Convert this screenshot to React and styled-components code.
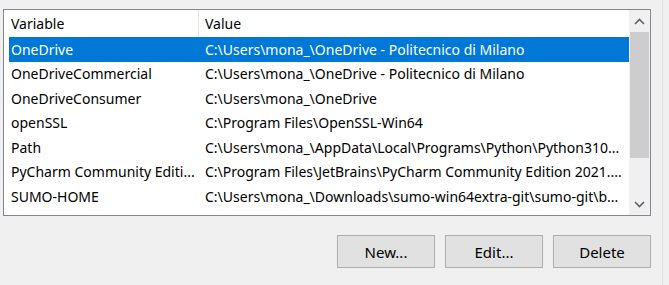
import styled, { createGlobalStyle } from 'styled-components';

const GlobalStyle = createGlobalStyle`
  html, body {
    margin: 0;
    padding: 0;
    background: #f0f0f0;
  }
  body {
    font-family: 'Noto Sans', 'Open Sans', sans-serif;
    font-size: 14px;
    color: #000;
  }
`;

const Window = styled.div`
  width: 663px;
  height: 285px;
  border-right: 1px solid #dfdfdf;
  box-sizing: border-box;
  padding: 9px 0 0 3px;
  display: flex;
  flex-direction: column;
`;

const ListBox = styled.div`
  width: 648px;
  height: 207px;
  box-sizing: border-box;
  border: 1px solid #828790;
  background: #fff;
  display: flex;
  overflow: hidden;
`;

const ListArea = styled.div`
  flex: 1;
  padding-left: 5px;
  overflow: hidden;
`;

const Row = styled.div`
  display: grid;
  grid-template-columns: 189px 1fr;
  height: ${(p) => (p.header ? '27px' : '24.5px')};
  align-items: center;
  background: ${(p) => (p.selected ? '#0078d7' : 'transparent')};
  color: ${(p) => (p.selected ? '#fff' : '#000')};
  white-space: nowrap;
`;

const Cell = styled.div`
  height: 100%;
  display: flex;
  align-items: center;
  overflow: hidden;
  padding-left: ${(p) => (p.second ? '6px' : '2px')};
  border-left: ${(p) => (p.divider ? '1px solid #e5e5e5' : 'none')};
  margin-left: ${(p) => (p.second && !p.divider ? '1px' : '0')};
`;

const ScrollBar = styled.div`
  width: 21px;
  background: #f0f0f0;
  display: flex;
  flex-direction: column;
  align-items: center;
`;

const Arrow = styled.div`
  height: 22px;
  width: 100%;
  display: flex;
  align-items: center;
  justify-content: center;
`;

const Track = styled.div`
  flex: 1;
  width: 19px;
`;

const Thumb = styled.div`
  height: 126px;
  background: #cdcdcd;
`;

const ButtonRow = styled.div`
  width: 648px;
  display: flex;
  justify-content: flex-end;
  gap: 10px;
  margin-top: 19px;
`;

const Button = styled.button`
  width: 98px;
  height: 33px;
  box-sizing: border-box;
  border: 1px solid #adadad;
  background: #e1e1e1;
  font-family: inherit;
  font-size: 15px;
  color: #000;
  padding: 0;
`;

const Chevron = ({ up }) => (
  <svg width="11" height="7" viewBox="0 0 11 7">
    <polyline
      points={up ? '1,6 5.5,1.5 10,6' : '1,1 5.5,5.5 10,1'}
      fill="none"
      stroke="#606060"
      strokeWidth="1.6"
    />
  </svg>
);

const vars = [
  ['OneDrive', 'C:\\Users\\mona_\\OneDrive - Politecnico di Milano'],
  ['OneDriveCommercial', 'C:\\Users\\mona_\\OneDrive - Politecnico di Milano'],
  ['OneDriveConsumer', 'C:\\Users\\mona_\\OneDrive'],
  ['openSSL', 'C:\\Program Files\\OpenSSL-Win64'],
  ['Path', 'C:\\Users\\mona_\\AppData\\Local\\Programs\\Python\\Python310...'],
  ['PyCharm Community Editi...', 'C:\\Program Files\\JetBrains\\PyCharm Community Edition 2021....'],
  ['SUMO-HOME', 'C:\\Users\\mona_\\Downloads\\sumo-win64extra-git\\sumo-git\\b...'],
  ['TEMP', 'C:\\Users\\mona_\\AppData\\Local\\Temp'],
];

const App = () => {
  return (
    <>
      <GlobalStyle />
      <Window>
        <ListBox>
          <ListArea>
            <Row header>
              <Cell>Variable</Cell>
              <Cell second divider>Value</Cell>
            </Row>
            {vars.map((v, i) => (
              <Row key={i} selected={i === 0}>
                <Cell>{v[0]}</Cell>
                <Cell second>{v[1]}</Cell>
              </Row>
            ))}
          </ListArea>
          <ScrollBar>
            <Arrow>
              <Chevron up />
            </Arrow>
            <Track>
              <Thumb />
            </Track>
            <Arrow>
              <Chevron />
            </Arrow>
          </ScrollBar>
        </ListBox>
        <ButtonRow>
          <Button>New...</Button>
          <Button>Edit...</Button>
          <Button>Delete</Button>
        </ButtonRow>
      </Window>
    </>
  );
};

export default App;
